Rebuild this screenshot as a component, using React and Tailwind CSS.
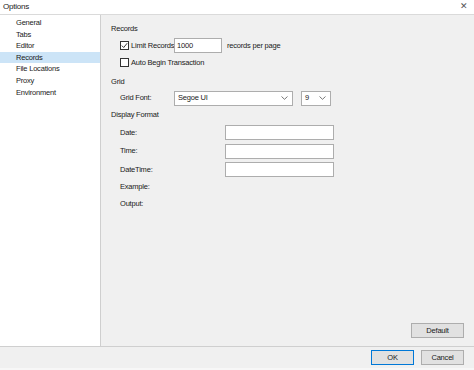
import React from "react";

const items = ["General", "Tabs", "Editor", "Records", "File Locations", "Proxy", "Environment"];

function Check({ checked, label, width = "" }) {
  return (
    <div className={`flex items-center gap-[2px] shrink-0 whitespace-nowrap ${width}`}>
      <div className="w-[9px] h-[9px] shrink-0 border border-[#333] bg-white flex items-center justify-center">
        {checked && (
          <svg width="7" height="7" viewBox="0 0 7 7">
            <path d="M0.8 3.6 L2.7 5.5 L6.2 1.2" stroke="#222" strokeWidth="0.9" fill="none" />
          </svg>
        )}
      </div>
      <span>{label}</span>
    </div>
  );
}

function Select({ value, width }) {
  return (
    <div className={`${width} h-[15px] border border-[#adadad] bg-white flex items-center justify-between pl-[3px] pr-[4px]`}>
      <span>{value}</span>
      <svg width="7" height="4" viewBox="0 0 7 4">
        <path d="M0.5 0.5 L3.5 3.3 L6.5 0.5" stroke="#555" strokeWidth="0.8" fill="none" />
      </svg>
    </div>
  );
}

function Field({ label }) {
  return (
    <div className="flex items-center h-[15px]">
      <span className="w-[114px] pl-[9px]">{label}</span>
      <div className="w-[109px] h-[15px] border border-[#adadad] bg-white" />
    </div>
  );
}

export default function App() {
  return (
    <div
      className="w-[474px] h-[370px] flex flex-col bg-white text-[7.5px] tracking-[-0.2px] text-[#1a1a1a] overflow-hidden whitespace-nowrap"
      style={{ fontFamily: '"Liberation Sans", Arial, sans-serif' }}
    >
      <div className="h-[15px] flex items-center justify-between pl-[3px] pr-[6px] border-b border-[#dadada]">
        <span className="text-[8px]">Options</span>
        <span className="text-[9px] text-[#555]">✕</span>
      </div>
      <div className="flex-1 flex min-h-0">
        <div className="w-[101px] bg-white border-r border-[#cfcfcf] pt-[2px]">
          {items.map((it) => (
            <div
              key={it}
              className={`h-[11.6px] leading-[11.6px] pl-[16px] ${it === "Records" ? "bg-[#cce4f7]" : ""}`}
            >
              {it}
            </div>
          ))}
        </div>
        <div className="flex-1 bg-[#f0f0f0] flex flex-col pl-[10px] pr-[10px] pt-[7px] pb-[8px]">
          <div className="h-[14px] flex items-center">Records</div>
          <div className="flex items-center pl-[9px] mt-[2px] h-[15px]">
            <Check checked label="Limit Records" width="w-[54px]" />
            <div className="w-[48px] h-[15px] shrink-0 border border-[#adadad] bg-white flex items-center pl-[2px]">1000</div>
            <span className="ml-[5px]">records per page</span>
          </div>
          <div className="pl-[9px] mt-[3px] h-[13px] flex items-center">
            <Check label="Auto Begin Transaction" />
          </div>
          <div className="h-[14px] flex items-center mt-[6px]">Grid</div>
          <div className="flex items-center pl-[9px] mt-[1px] h-[16px]">
            <span className="w-[54px]">Grid Font:</span>
            <Select value="Segoe UI" width="w-[119px]" />
            <div className="ml-[8px]">
              <Select value="9" width="w-[30px]" />
            </div>
          </div>
          <div className="h-[14px] flex items-center mt-[2px]">Display Format</div>
          <div className="flex flex-col gap-[3.5px] mt-[3px]">
            <Field label="Date:" />
            <Field label="Time:" />
            <Field label="DateTime:" />
          </div>
          <div className="pl-[9px] h-[14px] flex items-center mt-[3px]">Example:</div>
          <div className="pl-[9px] h-[14px] flex items-center mt-[3px]">Output:</div>
          <div className="flex-1" />
          <div className="flex justify-end">
            <div className="w-[53px] h-[15px] border border-[#adadad] bg-[#e1e1e1] flex items-center justify-center">Default</div>
          </div>
        </div>
      </div>
      <div className="h-[22px] bg-[#f0f0f0] border-t border-[#cfcfcf] flex items-center justify-end gap-[7px] pr-[10px]">
        <div className="w-[43px] h-[15px] border border-[#0078d7] bg-[#e1e1e1] flex items-center justify-center">OK</div>
        <div className="w-[43px] h-[15px] border border-[#adadad] bg-[#e1e1e1] flex items-center justify-center">Cancel</div>
      </div>
      <div className="h-[2px] bg-[#f7f7f7]" />
    </div>
  );
}
